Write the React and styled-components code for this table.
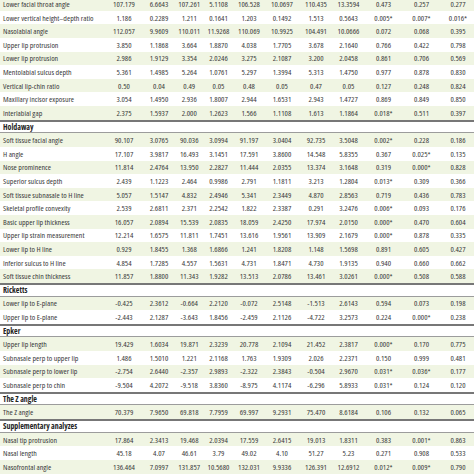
import React from "react";
import styled, { createGlobalStyle } from "styled-components";

const Global = createGlobalStyle`
  html, body { margin: 0; padding: 0; background: #ffffff; overflow: hidden; }
  body { width: 474px; height: 474px; }
`;

const COLS = "105px 38px 32px 28.5px 30px 31px 35px 33px 32px 38px 38px 35px";

const Table = styled.div`
  margin-top: -2.8px;
  width: 476px;
  font-family: "Open Sans", "Noto Sans", sans-serif;
  font-size: 7.9px;
  font-stretch: 84%;
  color: #3b3b3b;
`;

const Row = styled.div`
  display: grid;
  grid-template-columns: ${COLS};
  height: 13.62px;
  align-items: center;
  background: ${(p) => (p.$tint ? "#f0f5e3" : "#ffffff")};
`;

const Label = styled.div`
  padding-left: 3px;
  white-space: nowrap;
`;

const Num = styled.div`
  text-align: center;
  white-space: nowrap;
`;

const Section = styled.div`
  box-sizing: border-box;
  height: 13.62px;
  display: flex;
  align-items: center;
  padding-left: 3px;
  font-weight: 700;
  font-stretch: 75%;
  color: #242424;
  background: #ffffff;
  border-top: 2px solid #777777;
  border-bottom: 1.5px solid #9c9c9c;
`;

const data = [
  {
    title: null,
    rows: [
      ["Lower facial throat angle", "107.179 6.6643 107.261 5.1108 106.528 10.0697 110.435 13.3594 0.473 0.257 0.277"],
      ["Lower vertical height–depth ratio", "1.186 0.2289 1.211 0.1641 1.203 0.1492 1.513 0.5643 0.005* 0.007* 0.016*"],
      ["Nasolabial angle", "112.057 9.9609 110.011 11.9268 110.069 10.9925 104.491 10.0666 0.072 0.068 0.395"],
      ["Upper lip protrusion", "3.850 1.1868 3.664 1.8870 4.038 1.7705 3.678 2.1640 0.766 0.422 0.798"],
      ["Lower lip protrusion", "2.986 1.9129 3.354 2.0246 3.275 2.1087 3.200 2.0458 0.861 0.706 0.569"],
      ["Mentolabial sulcus depth", "5.361 1.4985 5.264 1.0761 5.297 1.3994 5.313 1.4750 0.977 0.878 0.830"],
      ["Vertical lip-chin ratio", "0.50 0.04 0.49 0.05 0.48 0.05 0.47 0.05 0.127 0.248 0.824"],
      ["Maxillary incisor exposure", "3.054 1.4950 2.936 1.8007 2.944 1.6531 2.943 1.4727 0.869 0.849 0.850"],
      ["Interlabial gap", "2.375 1.5937 2.000 1.2623 1.566 1.1108 1.613 1.1864 0.018* 0.511 0.397"],
    ],
  },
  {
    title: "Holdaway",
    rows: [
      ["Soft tissue facial angle", "90.107 3.0765 90.036 3.0994 91.197 3.0404 92.735 3.5048 0.002* 0.228 0.186"],
      ["H angle", "17.107 3.9817 16.493 3.1451 17.591 3.8600 14.548 5.8355 0.367 0.025* 0.135"],
      ["Nose prominence", "11.814 2.4764 13.950 2.2827 11.444 2.0355 13.374 3.1648 0.319 0.000* 0.828"],
      ["Superior sulcus depth", "2.439 1.1223 2.464 0.9986 2.791 1.1811 3.213 1.2804 0.013* 0.309 0.366"],
      ["Soft tissue subnasale to H line", "5.057 1.5147 4.832 2.4946 5.341 2.3449 4.870 2.8563 0.719 0.436 0.783"],
      ["Skeletal profile convexity", "2.539 2.6811 2.371 2.2542 1.822 2.3387 0.291 3.2476 0.006* 0.093 0.176"],
      ["Basic upper lip thickness", "16.057 2.0894 15.539 2.0835 18.059 2.4250 17.974 2.0150 0.000* 0.470 0.604"],
      ["Upper lip strain measurement", "12.214 1.6575 11.811 1.7451 13.616 1.9561 13.909 2.1679 0.000* 0.878 0.335"],
      ["Lower lip to H line", "0.929 1.8455 1.368 1.6866 1.241 1.8208 1.148 1.5698 0.891 0.605 0.427"],
      ["Inferior sulcus to H line", "4.854 1.7285 4.557 1.5631 4.731 1.8471 4.730 1.9135 0.940 0.660 0.662"],
      ["Soft tissue chin thickness", "11.857 1.8800 11.343 1.9282 13.513 2.0786 13.461 3.0261 0.000* 0.508 0.588"],
    ],
  },
  {
    title: "Ricketts",
    rows: [
      ["Lower lip to E-plane", "-0.425 2.3612 -0.664 2.2120 -0.072 2.5148 -1.513 2.6143 0.594 0.073 0.198"],
      ["Upper lip to E-plane", "-2.443 2.1287 -3.643 1.8456 -2.459 2.1126 -4.722 3.2573 0.224 0.000* 0.238"],
    ],
  },
  {
    title: "Epker",
    rows: [
      ["Upper lip length", "19.429 1.6034 19.871 2.3239 20.778 2.1094 21.452 2.3817 0.000* 0.170 0.775"],
      ["Subnasale perp to upper lip", "1.486 1.5010 1.221 2.1168 1.763 1.9309 2.026 2.2371 0.150 0.999 0.481"],
      ["Subnasale perp to lower lip", "-2.754 2.6440 -2.357 2.9893 -2.322 2.3843 -0.504 2.9670 0.031* 0.036* 0.177"],
      ["Subnasale perp to chin", "-9.504 4.2072 -9.518 3.8360 -8.975 4.1174 -6.296 5.8933 0.031* 0.124 0.120"],
    ],
  },
  {
    title: "The Z angle",
    rows: [
      ["The Z angle", "70.379 7.9650 69.818 7.7959 69.997 9.2931 75.470 8.6184 0.106 0.132 0.065"],
    ],
  },
  {
    title: "Supplementary analyzes",
    rows: [
      ["Nasal tip protrusion", "17.864 2.3413 19.468 2.0394 17.559 2.6415 19.013 1.8311 0.383 0.001* 0.863"],
      ["Nasal length", "45.18 4.07 46.61 3.79 49.02 4.10 51.27 5.23 0.271 0.908 0.533"],
      ["Nasofrontal angle", "136.464 7.0997 131.857 10.5680 132.031 9.9336 126.391 12.6912 0.012* 0.009* 0.790"],
    ],
  },
];

export default function App() {
  return (
    <>
      <Global />
      <Table>
        {data.map((sec, si) => (
          <React.Fragment key={si}>
            {sec.title && <Section>{sec.title}</Section>}
            {sec.rows.map(([label, nums], ri) => (
              <Row key={ri} $tint={ri % 2 === 0}>
                <Label>{label}</Label>
                {nums.split(" ").map((n, ni) => (
                  <Num key={ni}>{n}</Num>
                ))}
              </Row>
            ))}
          </React.Fragment>
        ))}
      </Table>
    </>
  );
}
